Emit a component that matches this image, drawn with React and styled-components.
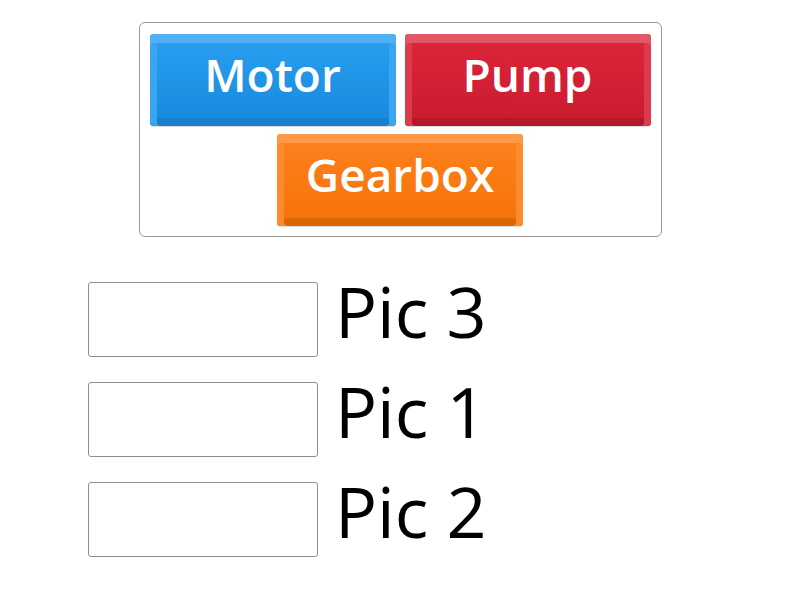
import React from 'react';
import styled, { createGlobalStyle } from 'styled-components';

const GlobalStyle = createGlobalStyle`
    html, body {
        margin: 0;
        padding: 0;
        background: #fff;
        font-family: "Open Sans", "Liberation Sans", sans-serif;
    }
`;

const Page = styled.div`
    width: 800px;
    height: 600px;
    padding-top: 22px;
    box-sizing: border-box;
`;

const Tray = styled.div`
    width: 523px;
    margin: 0 auto;
    box-sizing: border-box;
    border: 1px solid #9a9a9a;
    border-radius: 6px;
    padding: 11px 10px 10px 10px;
    display: flex;
    flex-wrap: wrap;
    justify-content: center;
    gap: 8px 9px;
`;

const palettes = {
    blue: { hi: '#2a9ff0', lo: '#1789dc', top: '#4fb1f3', side: '#3ba5ef', bottom: '#1680cc' },
    red: { hi: '#de2539', lo: '#c91b2f', top: '#e35668', side: '#dc3a4d', bottom: '#b3182a' },
    orange: { hi: '#fd8220', lo: '#f67206', top: '#fe9a48', side: '#fc8b2e', bottom: '#d96804' },
};

const Tile = styled.div`
    width: 246px;
    height: 92px;
    box-sizing: border-box;
    border-radius: 4px;
    display: flex;
    align-items: center;
    justify-content: center;
    padding-bottom: 13px;
    color: #fff;
    font-size: 46px;
    font-weight: 600;
    background: linear-gradient(${p => palettes[p.$tone].hi}, ${p => palettes[p.$tone].lo});
    box-shadow:
        inset 0 9px 0 ${p => palettes[p.$tone].top},
        inset 7px 0 0 ${p => palettes[p.$tone].side},
        inset -7px 0 0 ${p => palettes[p.$tone].side},
        inset 0 -8px 0 ${p => palettes[p.$tone].bottom},
        0 1px 1px rgba(0, 0, 0, 0.15);
`;

const Answers = styled.div`
    margin-top: 45px;
    padding-left: 88px;
    display: flex;
    flex-direction: column;
    gap: 25px;
`;

const Row = styled.div`
    display: flex;
    align-items: center;
    gap: 17px;
    height: 75px;
`;

const Slot = styled.div`
    width: 230px;
    height: 75px;
    box-sizing: border-box;
    border: 1px solid #8e8e8e;
    border-radius: 3px;
    background: #fff;
`;

const Label = styled.span`
    font-size: 70px;
    line-height: 1;
    color: #000;
    margin-top: -17px;
`;

const tiles = [
    { text: 'Motor', tone: 'blue' },
    { text: 'Pump', tone: 'red' },
    { text: 'Gearbox', tone: 'orange' },
];

const labels = ['Pic 3', 'Pic 1', 'Pic 2'];

const App = () => {
    return (
        <>
            <GlobalStyle />
            <Page>
                <Tray>
                    {tiles.map(t => (
                        <Tile key={t.text} $tone={t.tone}>{t.text}</Tile>
                    ))}
                </Tray>
                <Answers>
                    {labels.map(l => (
                        <Row key={l}>
                            <Slot />
                            <Label>{l}</Label>
                        </Row>
                    ))}
                </Answers>
            </Page>
        </>
    );
};

export default App;
